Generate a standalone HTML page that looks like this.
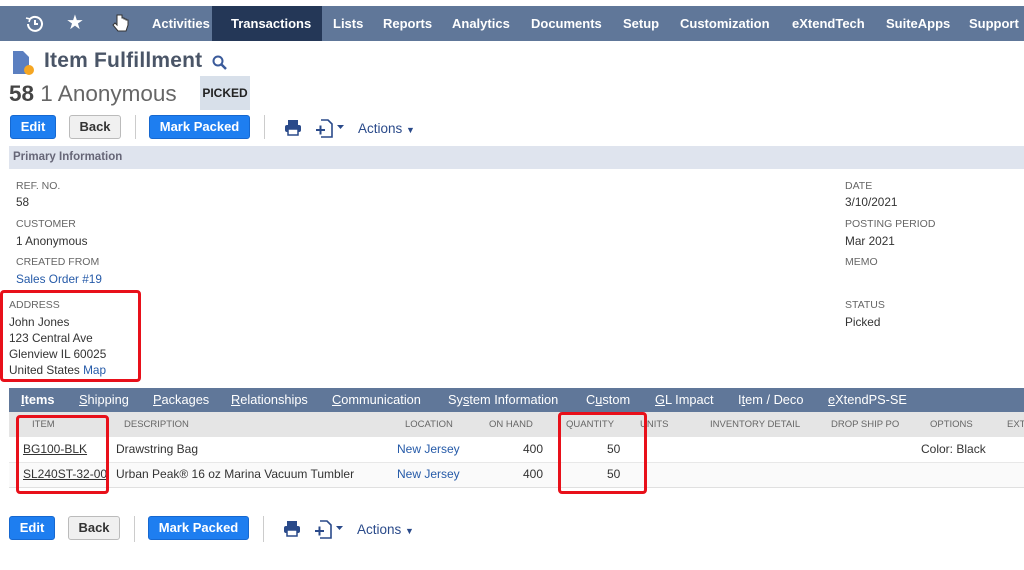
<!DOCTYPE html>
<html><head><meta charset="utf-8"><style>
*{margin:0;padding:0;box-sizing:border-box}
body{width:1024px;height:570px;overflow:hidden;background:#fff;font-family:"Liberation Sans",sans-serif;position:relative;color:#333}
.a{position:absolute;white-space:nowrap}
.nav{left:0;top:6px;width:1024px;height:35px;background:#607799}
.nv{top:6px;height:35px;line-height:35px;color:#fff;font-weight:bold;font-size:13px}
.btn{height:24px;line-height:22px;border-radius:3px;font-size:13px;font-weight:bold;text-align:center}
.blue{background:#1e7ef0;color:#fff;border:1px solid #1668d0}
.gray{background:#f0f0f0;color:#333;border:1px solid #bbb}
.lbl{font-size:10.5px;color:#666}
.val{font-size:11.8px;color:#333}
.lnk{color:#255aa8}
.tab{top:388px;height:24px;line-height:24px;color:#fff;font-size:12.8px}
.th{top:413px;height:24px;line-height:24px;font-size:9.5px;color:#666}
.td{font-size:12px;line-height:25px;height:25px}
.red{border:3px solid #e8101a;border-radius:4px}
</style></head><body>
<div class="a nav"></div>
<div class="a" style="left:212px;top:6px;width:110px;height:35px;background:#243757"></div>
<svg class="a" style="left:24px;top:13px" width="22" height="22" viewBox="0 0 22 22"><path d="M4 11a7 7 0 1 0 2-5" fill="none" stroke="#fff" stroke-width="2"/><path d="M11 7v4h3" fill="none" stroke="#fff" stroke-width="2"/><path d="M2 5l4 1 -1 3" fill="none" stroke="#fff" stroke-width="1.6"/></svg>
<div class="a" style="left:66px;top:10px;color:#fff;font-size:20px">★</div>
<svg class="a" style="left:110px;top:12px" width="20" height="22" viewBox="0 0 20 22"><path d="M7 3v10l-2-2-2 2 5 6h8l2-6v-5h-2v-1h-2v-1h-2V3z" fill="#fff" stroke="#333" stroke-width="1"/></svg>
<div class="a nv" style="left:152px">Activities</div>
<div class="a nv" style="left:231px">Transactions</div>
<div class="a nv" style="left:333px">Lists</div>
<div class="a nv" style="left:383px">Reports</div>
<div class="a nv" style="left:452px">Analytics</div>
<div class="a nv" style="left:531px">Documents</div>
<div class="a nv" style="left:623px">Setup</div>
<div class="a nv" style="left:680px">Customization</div>
<div class="a nv" style="left:792px">eXtendTech</div>
<div class="a nv" style="left:886px">SuiteApps</div>
<div class="a nv" style="left:969px">Support</div>

<svg class="a" style="left:12px;top:50px" width="24" height="26" viewBox="0 0 24 26"><path d="M1 1h10l6 6v17H1z" fill="#5b7fc0"/><circle cx="17" cy="20" r="5" fill="#f5a623"/></svg>
<div class="a" style="left:44px;top:49px;font-size:21px;font-weight:bold;color:#4a5567;letter-spacing:0.2px">Item Fulfillment</div>
<svg class="a" style="left:212px;top:55px" width="16" height="16" viewBox="0 0 16 16"><circle cx="6" cy="6" r="4.5" fill="none" stroke="#3a5a9a" stroke-width="2"/><path d="M9 9l5 5" stroke="#3a5a9a" stroke-width="2.5"/></svg>
<div class="a" style="left:9px;top:81px;font-size:22.5px;color:#666"><b style="color:#444">58</b> 1 Anonymous</div>
<div class="a" style="left:200px;top:76px;width:50px;height:34px;background:#d8e0ea;font-size:12px;font-weight:bold;line-height:34px;text-align:center;color:#222">PICKED</div>

<div class="a btn blue" style="left:10px;top:115px;width:46px">Edit</div>
<div class="a btn gray" style="left:69px;top:115px;width:52px">Back</div>
<div class="a" style="left:135px;top:115px;width:1px;height:24px;background:#ccc"></div>
<div class="a btn blue" style="left:149px;top:115px;width:101px">Mark Packed</div>
<div class="a" style="left:264px;top:115px;width:1px;height:24px;background:#ccc"></div>
<svg class="a" style="left:284px;top:119px" width="18" height="17" viewBox="0 0 18 17"><rect x="4" y="1" width="10" height="5" fill="#2a4a8a"/><rect x="1" y="6" width="16" height="7" rx="2" fill="#2a4a8a"/><rect x="4" y="10" width="10" height="6" fill="#fff" stroke="#2a4a8a" stroke-width="1.5"/></svg>
<svg class="a" style="left:315px;top:118px" width="32" height="20" viewBox="0 0 32 20"><path d="M6 2h7l4 4v13H6" fill="none" stroke="#2a4a8a" stroke-width="1.6"/><path d="M1 12h9M5.5 7.5v9" stroke="#2a4a8a" stroke-width="2"/><path d="M22 7h7l-3.5 4z" fill="#2a4a8a"/></svg>
<div class="a" style="left:358px;top:121px;font-size:13.5px;color:#2a4a8a">Actions <span style="font-size:9px">▼</span></div>

<div class="a" style="left:9px;top:146px;width:1015px;height:23px;background:#dfe4ee;font-size:11.5px;font-weight:bold;color:#667;line-height:23px;padding-left:4px">Primary Information</div>

<div class="a lbl" style="left:16px;top:180px">REF. NO.</div>
<div class="a val" style="left:16px;top:195px">58</div>
<div class="a lbl" style="left:16px;top:218px">CUSTOMER</div>
<div class="a val" style="left:16px;top:234px">1 Anonymous</div>
<div class="a lbl" style="left:16px;top:256px">CREATED FROM</div>
<div class="a val lnk" style="left:16px;top:272px">Sales Order #19</div>
<div class="a lbl" style="left:9px;top:299px">ADDRESS</div>
<div class="a val" style="left:9px;top:314px;line-height:16px;white-space:normal">John Jones<br>123 Central Ave<br>Glenview IL 60025<br>United States <span class="lnk">Map</span></div>
<div class="a red" style="left:0;top:290px;width:141px;height:92px"></div>

<div class="a lbl" style="left:845px;top:180px">DATE</div>
<div class="a val" style="left:845px;top:195px">3/10/2021</div>
<div class="a lbl" style="left:845px;top:218px">POSTING PERIOD</div>
<div class="a val" style="left:845px;top:234px">Mar 2021</div>
<div class="a lbl" style="left:845px;top:256px">MEMO</div>
<div class="a lbl" style="left:845px;top:299px">STATUS</div>
<div class="a val" style="left:845px;top:315px">Picked</div>

<div class="a" style="left:9px;top:388px;width:1015px;height:24px;background:#607799"></div>
<div class="a tab" style="left:21px;font-weight:bold"><u>I</u>tems</div>
<div class="a" style="left:33px;top:407px;width:0;height:0;border:5px solid transparent;border-bottom-color:#e5e5e5"></div>
<div class="a tab" style="left:79px"><u>S</u>hipping</div>
<div class="a tab" style="left:153px"><u>P</u>ackages</div>
<div class="a tab" style="left:231px"><u>R</u>elationships</div>
<div class="a tab" style="left:332px"><u>C</u>ommunication</div>
<div class="a tab" style="left:448px">Sy<u>s</u>tem Information</div>
<div class="a tab" style="left:586px">C<u>u</u>stom</div>
<div class="a tab" style="left:655px"><u>G</u>L Impact</div>
<div class="a tab" style="left:738px">I<u>t</u>em / Deco</div>
<div class="a tab" style="left:828px"><u>e</u>XtendPS-SE</div>

<div class="a" style="left:9px;top:412px;width:1015px;height:25px;background:#e5e5e5"></div>
<div class="a th" style="left:32px">ITEM</div>
<div class="a th" style="left:124px">DESCRIPTION</div>
<div class="a th" style="left:405px">LOCATION</div>
<div class="a th" style="left:489px">ON HAND</div>
<div class="a th" style="left:566px">QUANTITY</div>
<div class="a th" style="left:640px">UNITS</div>
<div class="a th" style="left:710px">INVENTORY DETAIL</div>
<div class="a th" style="left:831px">DROP SHIP PO</div>
<div class="a th" style="left:930px">OPTIONS</div>
<div class="a th" style="left:1007px">EXT</div>
<div class="a" style="left:9px;top:462px;width:1015px;height:1px;background:#e8e8e8"></div>
<div class="a" style="left:9px;top:463px;width:1015px;height:24px;background:#fafafa"></div>
<div class="a" style="left:9px;top:487px;width:1015px;height:1px;background:#e0e0e0"></div>

<div class="a td" style="left:23px;top:437px;text-decoration:underline">BG100-BLK</div>
<div class="a td" style="left:116px;top:437px">Drawstring Bag</div>
<div class="a td lnk" style="left:397px;top:437px">New Jersey</div>
<div class="a td" style="left:523px;top:437px">400</div>
<div class="a td" style="left:607px;top:437px">50</div>
<div class="a td" style="left:921px;top:437px">Color: Black</div>
<div class="a td" style="left:23px;top:462px;text-decoration:underline">SL240ST-32-00</div>
<div class="a td" style="left:116px;top:462px">Urban Peak® 16 oz Marina Vacuum Tumbler</div>
<div class="a td lnk" style="left:397px;top:462px">New Jersey</div>
<div class="a td" style="left:523px;top:462px">400</div>
<div class="a td" style="left:607px;top:462px">50</div>
<div class="a red" style="left:16px;top:415px;width:93px;height:79px"></div>
<div class="a red" style="left:558px;top:412px;width:89px;height:82px"></div>

<div class="a btn blue" style="left:9px;top:516px;width:46px">Edit</div>
<div class="a btn gray" style="left:68px;top:516px;width:52px">Back</div>
<div class="a" style="left:134px;top:516px;width:1px;height:26px;background:#ccc"></div>
<div class="a btn blue" style="left:148px;top:516px;width:101px">Mark Packed</div>
<div class="a" style="left:263px;top:516px;width:1px;height:26px;background:#ccc"></div>
<svg class="a" style="left:283px;top:520px" width="18" height="17" viewBox="0 0 18 17"><rect x="4" y="1" width="10" height="5" fill="#2a4a8a"/><rect x="1" y="6" width="16" height="7" rx="2" fill="#2a4a8a"/><rect x="4" y="10" width="10" height="6" fill="#fff" stroke="#2a4a8a" stroke-width="1.5"/></svg>
<svg class="a" style="left:314px;top:519px" width="32" height="20" viewBox="0 0 32 20"><path d="M6 2h7l4 4v13H6" fill="none" stroke="#2a4a8a" stroke-width="1.6"/><path d="M1 12h9M5.5 7.5v9" stroke="#2a4a8a" stroke-width="2"/><path d="M22 7h7l-3.5 4z" fill="#2a4a8a"/></svg>
<div class="a" style="left:357px;top:522px;font-size:13.5px;color:#2a4a8a">Actions <span style="font-size:9px">▼</span></div>
</body></html>
